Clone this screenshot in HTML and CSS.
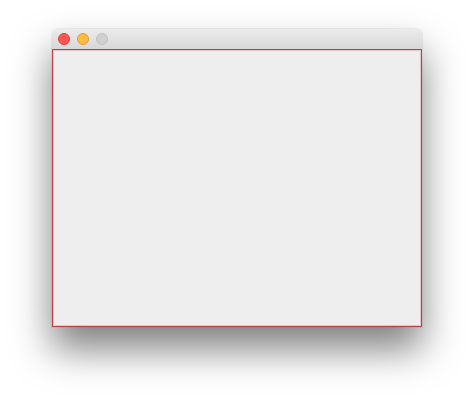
FILE: index.html
```html
<!DOCTYPE html>
<html>
<head>
<meta charset="utf-8">
<link rel="stylesheet" href="styles.css">
</head>
<body>
<div class="window">
  <div class="titlebar">
    <span class="light close"></span>
    <span class="light minimize"></span>
    <span class="light zoom"></span>
  </div>
  <div class="content"></div>
</div>
</body>
</html>
```
FILE: styles.css
```css
html, body {
  margin: 0;
  padding: 0;
  background: #ffffff;
  font-family: "Liberation Sans", Arial, sans-serif;
}
html {
  height: 100%;
}
body {
  box-sizing: border-box;
  min-height: 401px;
  padding: 29px 0 0 52px;
}
.window {
  width: 370px;
  border-radius: 5px 5px 0 0;
  box-shadow: 0 22px 38px rgba(0, 0, 0, 0.5), 0 0 0 1px rgba(0, 0, 0, 0.05);
}
.titlebar {
  height: 20px;
  display: flex;
  align-items: center;
  gap: 7px;
  padding-left: 6px;
  border-radius: 5px 5px 0 0;
  background: linear-gradient(#ebebeb, #d8d8d8);
}
.light {
  width: 12px;
  height: 12px;
  border-radius: 50%;
  box-sizing: border-box;
}
.close {
  background: #fc5753;
  border: 1px solid #df3e3a;
}
.minimize {
  background: #fdbc40;
  border: 1px solid #de9f34;
}
.zoom {
  background: #d0d0d0;
  border: 1px solid #c0c0c0;
}
.content {
  height: 276px;
  background: #eeeeee;
  border: 1px solid #c23f48;
  box-shadow: inset 0 0 0 1px rgba(214, 120, 130, 0.35);
}
```
